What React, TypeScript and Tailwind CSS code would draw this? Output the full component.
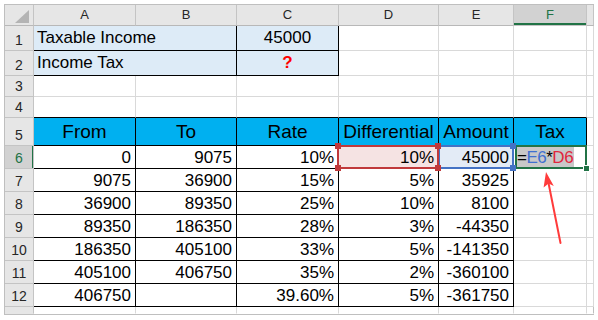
import React from "react";

const FONT = { fontFamily: '"Liberation Sans", Arial, sans-serif' };

type CellProps = {
  children?: React.ReactNode;
  cls?: string;
};

function Cell({ children, cls = "" }: CellProps) {
  return (
    <div className={`border-r border-b flex items-center overflow-hidden whitespace-nowrap ${cls}`}>
      {children}
    </div>
  );
}

const G = "border-r-[#d9d9d9] border-b-[#d9d9d9] bg-white";
const B = "border-r-black border-b-black";
const H = "border-r-[#c4c4c4] border-b-[#b8b8b8] bg-[#e6e6e6] justify-center text-[13px] text-[#262626]";
const RH = "border-r-[#c4c4c4] border-b-[#c4c4c4] bg-[#e6e6e6] justify-center items-end pb-[3px] text-[14px] leading-none text-[#262626]";

const data: (string | number)[][] = [
  [0, 9075, "10%", "10%", 45000],
  [9075, 36900, "15%", "5%", 35925],
  [36900, 89350, "25%", "10%", 8100],
  [89350, 186350, "28%", "3%", -44350],
  [186350, 405100, "33%", "5%", -141350],
  [405100, 406750, "35%", "2%", -360100],
  [406750, "", "39.60%", "5%", -361750],
];

function Handle({ x, y, color }: { x: number; y: number; color: string }) {
  return (
    <div
      className="absolute w-[6px] h-[6px]"
      style={{ left: x, top: y, background: color }}
    />
  );
}

export default function App() {
  return (
    <div className="relative w-[598px] h-[320px] bg-white pl-[4px] pt-[4px] overflow-hidden" style={FONT}>
      <div className="grid w-[590px] border-l border-t border-b border-[#bfbfbf] grid-cols-[29px_102px_101px_102px_100px_75px_73px_7px] grid-rows-[21px_25px_25px_21px_21px_28px_23px_23px_23px_23px_23px_23px_23px_7px] text-[17px] text-black">
        {/* header row */}
        <Cell cls={`${H} relative`}>
          <svg className="absolute left-[10px] top-[5px]" width="15" height="13" viewBox="0 0 15 13">
            <polygon points="14,0 14,13 0,13" fill="#b4b4b4" />
          </svg>
        </Cell>
        <Cell cls={H}>A</Cell>
        <Cell cls={H}>B</Cell>
        <Cell cls={H}>C</Cell>
        <Cell cls={H}>D</Cell>
        <Cell cls={H}>E</Cell>
        <Cell cls="border-r-[#c4c4c4] border-b-[#c4c4c4] bg-[#d2d2d2] justify-center text-[13px] text-[#217346] relative">
          F
          <div className="absolute left-0 right-0 bottom-0 h-[2px] bg-[#217346]" />
        </Cell>
        <Cell cls={H}></Cell>

        {/* row 1 */}
        <Cell cls={RH}>1</Cell>
        <Cell cls={`${B} col-span-2 bg-[#ddebf7] pl-[3px]`}>Taxable Income</Cell>
        <Cell cls={`${B} bg-[#ddebf7] justify-center`}>45000</Cell>
        <Cell cls={G}></Cell>
        <Cell cls={G}></Cell>
        <Cell cls={G}></Cell>
        <Cell cls={G}></Cell>

        {/* row 2 */}
        <Cell cls={RH}>2</Cell>
        <Cell cls={`${B} col-span-2 bg-[#ddebf7] pl-[3px]`}>Income Tax</Cell>
        <Cell cls={`${B} bg-[#ddebf7] justify-center`}>
          <span className="text-[#ff0000] font-bold">?</span>
        </Cell>
        <Cell cls={G}></Cell>
        <Cell cls={G}></Cell>
        <Cell cls={G}></Cell>
        <Cell cls={G}></Cell>

        {/* row 3 */}
        <Cell cls={RH}>3</Cell>
        <Cell cls={G}></Cell>
        <Cell cls={G}></Cell>
        <Cell cls={G}></Cell>
        <Cell cls={G}></Cell>
        <Cell cls={G}></Cell>
        <Cell cls={G}></Cell>
        <Cell cls={G}></Cell>

        {/* row 4 */}
        <Cell cls={RH}>4</Cell>
        <Cell cls="border-r-[#d9d9d9] border-b-black"></Cell>
        <Cell cls="border-r-[#d9d9d9] border-b-black"></Cell>
        <Cell cls="border-r-[#d9d9d9] border-b-black"></Cell>
        <Cell cls="border-r-[#d9d9d9] border-b-black"></Cell>
        <Cell cls="border-r-[#d9d9d9] border-b-black"></Cell>
        <Cell cls="border-r-[#d9d9d9] border-b-black"></Cell>
        <Cell cls={G}></Cell>

        {/* row 5 */}
        <Cell cls={RH}>5</Cell>
        {["From", "To", "Rate", "Differential", "Amount", "Tax"].map((t) => (
          <Cell key={t} cls={`${B} bg-[#00b0f0] justify-center text-[19px] pt-[2px]`}>
            {t}
          </Cell>
        ))}
        <Cell cls={G}></Cell>

        {/* rows 6-12 */}
        {data.map((row, i) => {
          const r = i + 6;
          const sel = r === 6;
          return (
            <React.Fragment key={r}>
              {sel ? (
                <Cell cls="border-r-[#c4c4c4] border-b-[#c4c4c4] bg-[#d2d2d2] justify-center items-end pb-[3px] text-[14px] leading-none text-[#217346] relative">
                  6
                  <div className="absolute right-[-1px] top-0 bottom-[-1px] w-[2px] bg-[#217346]" />
                </Cell>
              ) : (
                <Cell cls={RH}>{r}</Cell>
              )}
              {row.map((v, j) => {
                let bg = "bg-white";
                if (sel && j === 3) bg = "bg-[#f5e3e3]";
                if (sel && j === 4) bg = "bg-[#e3ebf6]";
                return (
                  <Cell key={j} cls={`${B} ${bg} justify-end pr-[4px] pt-[2px]`}>
                    {v}
                  </Cell>
                );
              })}
              {sel ? (
                <Cell cls={`${G} pl-[3px] pt-[1px]`}>
                  <span className="bg-[#c8c8c8] pr-[1px] tracking-[-0.5px]">
                    <span className="text-black">=</span>
                    <span className="text-[#3f6fd0]">E6</span>
                    <span className="text-black">*</span>
                    <span className="text-[#e0263c]">D6</span>
                  </span>
                </Cell>
              ) : (
                <Cell cls={G}></Cell>
              )}
              <Cell cls={G}></Cell>
            </React.Fragment>
          );
        })}

        {/* row 13 partial */}
        <Cell cls="border-r-[#c4c4c4] border-b-transparent bg-[#e6e6e6] justify-center items-start pt-[4px] text-[14px] text-[#262626] leading-none">
          13
        </Cell>
        <Cell cls="border-r-[#d9d9d9] border-b-transparent"></Cell>
        <Cell cls="border-r-[#d9d9d9] border-b-transparent"></Cell>
        <Cell cls="border-r-[#d9d9d9] border-b-transparent"></Cell>
        <Cell cls="border-r-[#d9d9d9] border-b-transparent"></Cell>
        <Cell cls="border-r-[#d9d9d9] border-b-transparent"></Cell>
        <Cell cls="border-r-[#d9d9d9] border-b-transparent"></Cell>
        <Cell cls="border-r-[#bfbfbf] border-b-transparent"></Cell>
      </div>

      {/* selection overlays */}
      <div className="absolute left-[438px] top-[145px] w-[76px] h-[24px] border-2 border-[#4472c4]" />
      <div className="absolute left-[337px] top-[145px] w-[102px] h-[24px] border-2 border-[#c0393b]" />
      <div className="absolute left-[515px] top-[145px] w-[72px] h-[24px] border-2 border-[#217346]" />
      <Handle x={510} y={143} color="#4472c4" />
      <Handle x={510} y={165} color="#4472c4" />
      <Handle x={335} y={143} color="#c0393b" />
      <Handle x={435} y={143} color="#c0393b" />
      <Handle x={335} y={165} color="#c0393b" />
      <Handle x={435} y={165} color="#c0393b" />
      <div className="absolute left-[583px] top-[165px] w-[7px] h-[7px] bg-[#217346] border border-white" />

      {/* arrow */}
      <svg className="absolute left-0 top-0 pointer-events-none" width="598" height="320" viewBox="0 0 598 320">
        <line x1="560.5" y1="243" x2="548.5" y2="183" stroke="#ff3b3b" strokeWidth="2" strokeLinecap="round" />
        <polygon points="546,172 553.8,186 548.6,183.5 543.6,187.6" fill="#ff3b3b" />
      </svg>
    </div>
  );
}
